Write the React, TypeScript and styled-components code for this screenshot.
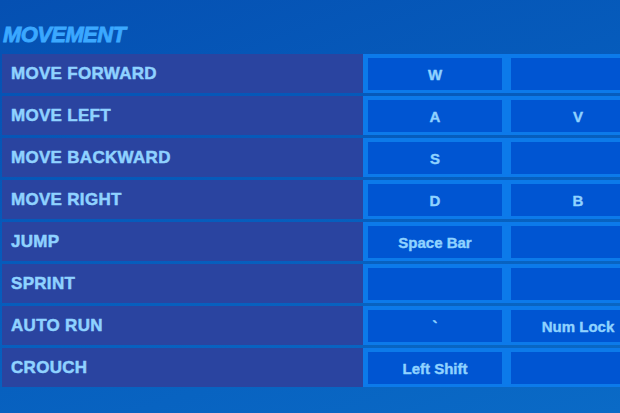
import React, { ReactElement } from 'react';
import styled, { createGlobalStyle } from 'styled-components';

const GlobalStyle = createGlobalStyle`
  html, body {
    margin: 0;
    padding: 0;
    width: 620px;
    height: 413px;
    overflow: hidden;
  }
  body {
    background: linear-gradient(160deg, #0550b2 0%, #065cbc 45%, #0a6ac6 100%);
    font-family: "Liberation Sans", Arial, sans-serif;
  }
`;

const Page = styled.div`
  width: 620px;
  height: 413px;
  padding: 21px 0 0 2px;
  box-sizing: border-box;
  overflow: hidden;
`;

const Title = styled.h2`
  margin: 0 0 0 1px;
  height: 33px;
  font-size: 22px;
  line-height: 28px;
  font-weight: 700;
  font-style: italic;
  letter-spacing: -0.6px;
  color: #3ba8ff;
  -webkit-text-stroke: 0.8px #3ba8ff;
`;

const Table = styled.div`
  display: flex;
  flex-direction: column;
  gap: 3px;
`;

const Row = styled.div`
  display: grid;
  grid-template-columns: 361px auto;
  height: 39px;
`;

const Label = styled.div`
  display: flex;
  align-items: center;
  padding-left: 9px;
  background: #2a44a0;
  color: #8fd2ff;
  font-size: 17px;
  font-weight: 700;
  letter-spacing: 0.3px;
  -webkit-text-stroke: 0.5px #8fd2ff;
`;

const Keys = styled.div`
  display: flex;
  gap: 9px;
  padding: 4px 5px 3px 5px;
  background: #0c7aea;
`;

const Key = styled.div`
  width: 134px;
  display: flex;
  align-items: center;
  justify-content: center;
  background: #0055d2;
  color: #8fd2ff;
  font-size: 15px;
  font-weight: 700;
  -webkit-text-stroke: 0.4px #8fd2ff;
`;

const bindings: [string, string, string][] = [
  ['MOVE FORWARD', 'W', ''],
  ['MOVE LEFT', 'A', 'V'],
  ['MOVE BACKWARD', 'S', ''],
  ['MOVE RIGHT', 'D', 'B'],
  ['JUMP', 'Space Bar', ''],
  ['SPRINT', '', ''],
  ['AUTO RUN', '`', 'Num Lock'],
  ['CROUCH', 'Left Shift', ''],
];

const App = (): ReactElement => {
  return (
    <>
      <GlobalStyle />
      <Page>
        <Title>MOVEMENT</Title>
        <Table>
          {bindings.map(([action, primary, secondary]) => (
            <Row key={action}>
              <Label>{action}</Label>
              <Keys>
                <Key>{primary}</Key>
                <Key>{secondary}</Key>
              </Keys>
            </Row>
          ))}
        </Table>
      </Page>
    </>
  );
};

export default App;
